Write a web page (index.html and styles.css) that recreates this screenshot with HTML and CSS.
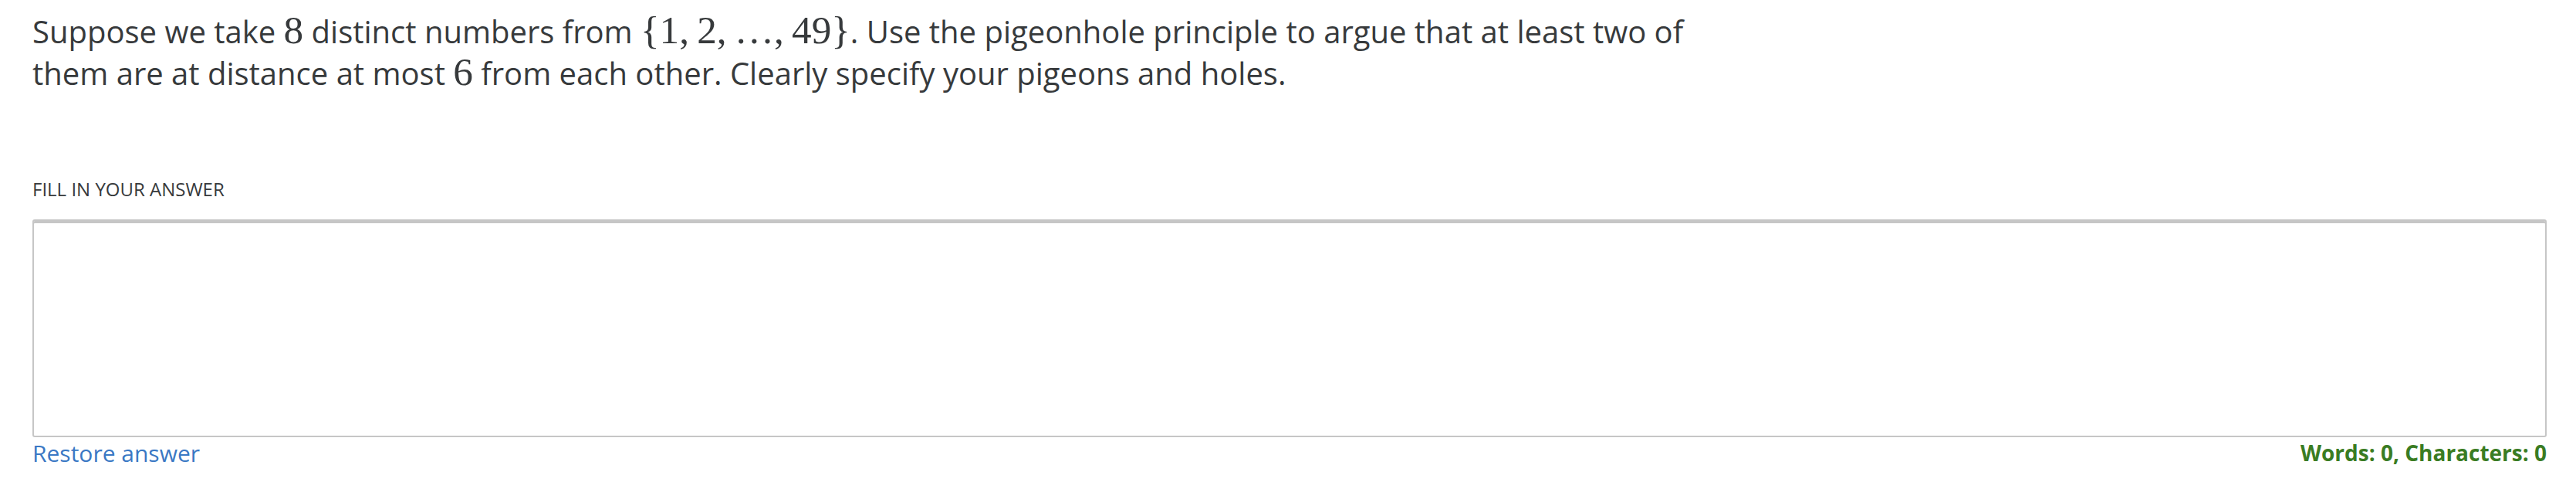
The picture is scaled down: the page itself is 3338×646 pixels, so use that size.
FILE: index.html
```html
<!DOCTYPE html>
<html lang="en">
<head>
<meta charset="utf-8">
<title>Question</title>
<link rel="stylesheet" href="styles.css">
</head>
<body>
<div class="question">
  <p class="prompt">Suppose we take <span class="math">8</span> distinct numbers from <span class="math"><span class="m">{1,</span><span class="m">2,</span><span class="m">&hellip;,</span><span class="m">49}</span></span>. Use the pigeonhole principle to argue that at least two of them are at distance at most <span class="math">6</span> from each other. Clearly specify your pigeons and holes.</p>
  <div class="label">FILL IN YOUR ANSWER</div>
  <div class="answer" contenteditable="true"></div>
  <div class="footer">
    <a class="restore" href="#">Restore answer</a>
    <span class="count">Words: 0, Characters: 0</span>
  </div>
</div>
</body>
</html>
```

FILE: styles.css
```css
html, body {
  margin: 0;
  padding: 0;
  background: #ffffff;
}

.question {
  padding: 14px 38px 0 42px;
  font-family: "Open Sans", "Noto Sans", sans-serif;
  color: #373a3c;
}

.prompt {
  margin: 0;
  width: 2230px;
  font-size: 40px;
  line-height: 54px;
}

.math {
  font-family: "Liberation Serif", "DejaVu Serif", serif;
  font-size: 1.28em;
  line-height: 0.8;
}

.m {
  margin-right: 0.2em;
}

.m:last-child {
  margin-right: 0;
}

.label {
  margin-top: 106px;
  font-size: 24px;
  color: #373a3c;
}

.answer {
  margin-top: 23px;
  height: 278px;
  border: 2px solid #c6c6c6;
  box-shadow: inset 0 3px 0 #c6c6c6;
  border-radius: 3px;
  background: #fff;
}

.footer {
  display: flex;
  justify-content: space-between;
  align-items: flex-start;
}

.restore {
  font-size: 30px;
  color: #3a78c4;
  text-decoration: none;
}

.count {
  font-size: 28px;
  font-weight: 700;
  color: #3a7c23;
  margin-top: 1px;
}
```
